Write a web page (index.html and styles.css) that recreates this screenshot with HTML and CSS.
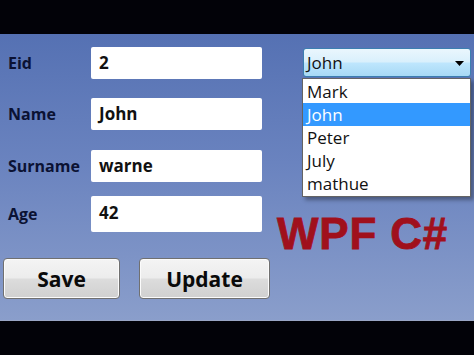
FILE: index.html
```html
<!DOCTYPE html>
<html>
<head>
<meta charset="utf-8">
<link rel="stylesheet" href="styles.css">
</head>
<body>
<div class="bar"></div>
<main class="window">
  <section class="left">
    <div class="form">
      <div class="row r1"><label class="lbl">Eid</label><div class="box">2</div></div>
      <div class="row r2"><label class="lbl">Name</label><div class="box">John</div></div>
      <div class="row r3"><label class="lbl">Surname</label><div class="box">warne</div></div>
      <div class="row r4"><label class="lbl">Age</label><div class="box tall">42</div></div>
    </div>
    <div class="buttons">
      <button class="btn save">Save</button>
      <button class="btn update">Update</button>
    </div>
  </section>
  <section class="right">
    <div class="combo-wrap">
      <div class="combo">
        <span>John</span>
        <svg class="arrow" width="9" height="5" viewBox="0 0 9 5"><path d="M0 0H9L4.5 5Z" fill="#000"/></svg>
      </div>
      <ul class="list">
        <li>Mark</li>
        <li class="sel">John</li>
        <li>Peter</li>
        <li>July</li>
        <li>mathue</li>
      </ul>
    </div>
    <div class="title">WPF C#</div>
  </section>
</main>
<div class="bar bottom"></div>
</body>
</html>
```
FILE: styles.css
```css
html, body {
  margin: 0;
  padding: 0;
  background: #000;
  width: 474px;
  height: 355px;
  overflow: hidden;
}
.bar {
  height: 34px;
  background: #020208;
}
.bar.bottom {
  height: 34px;
}
.window {
  height: 286px;
  border-bottom: 1px solid #9aa6c4;
  background: linear-gradient(to bottom, #5571b3 0%, #6a83bf 45%, #8a9ecb 100%);
  display: flex;
  font-family: "Open Sans", "Noto Sans", sans-serif;
}
.left {
  width: 277px;
  display: flex;
  flex-direction: column;
}
.form {
  display: flex;
  flex-direction: column;
  padding-left: 8px;
}
.row {
  display: flex;
  align-items: center;
}
.r1 { margin-top: 13px; }
.r2 { margin-top: 19px; }
.r3 { margin-top: 20px; }
.r4 { margin-top: 14px; }
.lbl {
  width: 83px;
  font-size: 16px;
  font-weight: 700;
  color: #0b1233;
}
.box {
  width: 163px;
  height: 32px;
  line-height: 32px;
  background: #fff;
  border-radius: 2px;
  padding-left: 8px;
  font-size: 17px;
  font-weight: 700;
  color: #111;
  box-sizing: content-box;
}
.box.tall {
  height: 36px;
  line-height: 34px;
}
.buttons {
  display: flex;
  gap: 19px;
  padding-left: 3px;
  margin-top: 26px;
}
.btn {
  height: 41px;
  border: 1px solid #707070;
  border-radius: 4px;
  background: linear-gradient(to bottom, #f4f4f4 0%, #ececec 48%, #dcdcdc 52%, #d0d0d0 100%);
  box-shadow: inset 0 0 0 1px #fbfbfb;
  font-family: "Open Sans", "Noto Sans", sans-serif;
  font-size: 21px;
  font-weight: 700;
  color: #0a0a0a;
  padding: 0;
}
.save { width: 117px; }
.update { width: 131px; }
.right {
  flex: 1;
  display: flex;
  flex-direction: column;
}
.combo-wrap {
  position: relative;
  margin-top: 14px;
  margin-left: 26px;
  width: 168px;
}
.combo {
  height: 27px;
  border: 1px solid #3c7fb1;
  border-radius: 3px;
  background: linear-gradient(to bottom, #eaf6fd 0%, #d9f0fc 48%, #bee6fd 52%, #a7d9f5 100%);
  display: flex;
  align-items: center;
  justify-content: space-between;
  padding: 0 6px 0 3px;
  font-size: 17px;
  color: #111;
}
.arrow {
  margin-top: 1px;
}
.list {
  position: absolute;
  top: 30px;
  left: -1px;
  width: 167px;
  margin: 0;
  padding: 1px 0;
  list-style: none;
  background: #fff;
  border: 1px solid #646464;
  box-shadow: 3px 3px 4px rgba(0, 0, 0, 0.35);
  font-size: 17px;
  color: #111;
}
.list li {
  height: 23px;
  line-height: 23px;
  padding-left: 4px;
}
.list li.sel {
  background: #3399ff;
  color: #fff;
}
.title {
  margin-top: 135px;
  margin-left: 0;
  font-family: "Liberation Sans", Arial, sans-serif;
  font-weight: 700;
  font-size: 44px;
  line-height: 44px;
  color: #a0101c;
  letter-spacing: 0.8px;
  -webkit-text-stroke: 0.8px #a0101c;
}
```
